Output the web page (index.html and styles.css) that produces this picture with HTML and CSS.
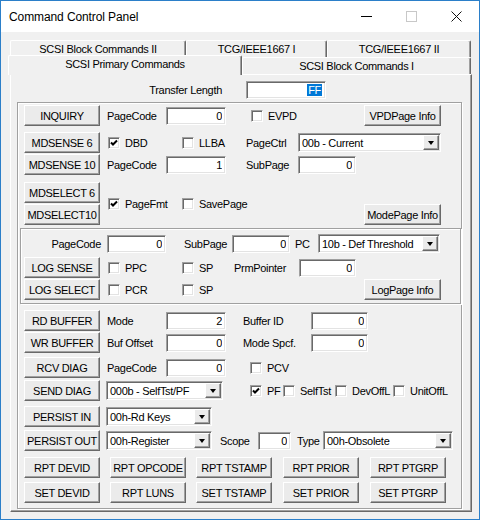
FILE: index.html
```html
<!DOCTYPE html>
<html lang="en">
<head>
  <meta charset="UTF-8">
  <title>Command Control Panel</title>
  <link rel="stylesheet" href="styles.css">
</head>
<body>
<div class="window">
  <div class="titlebar">
    <span class="title">Command Control Panel</span>
    <div class="caption-btns">
      <span class="cap"><svg width="11" height="11"><path d="M0 5.5H11" stroke="#000"/></svg></span>
      <span class="cap"><svg width="11" height="11"><rect x="0.5" y="0.5" width="10" height="10" fill="none" stroke="#c8c8c8"/></svg></span>
      <span class="cap"><svg width="11" height="11"><path d="M0.5 0.5L10.5 10.5M10.5 0.5L0.5 10.5" stroke="#111"/></svg></span>
    </div>
  </div>

  <div class="client">
    <div class="tabs">
      <div class="tabrow">
        <div class="tab w176">SCSI Block Commands II</div>
        <div class="tab w141">TCG/IEEE1667 I</div>
        <div class="tab w144">TCG/IEEE1667 II</div>
      </div>
      <div class="tabrow">
        <div class="tab selected w234">SCSI Primary Commands</div>
        <div class="tab w229">SCSI Block Commands I</div>
      </div>
    </div>

    <div class="panel">
      <div class="xfer">
        <span class="xfer-label">Transfer Length</span>
        <div class="field xfer-field"><span class="sel">FF</span></div>
      </div>

      <div class="group main">
        <div class="row mt2">
          <button class="btn">INQUIRY</button>
          <span class="lbl w59 ml7">PageCode</span>
          <input class="field w60" value="0">
          <span class="check ml25"><span class="box"></span>EVPD</span>
          <button class="btn info">VPDPage Info</button>
        </div>
        <div class="row mt6">
          <button class="btn">MDSENSE 6</button>
          <span class="check w74 ml8"><span class="box"><svg width="8" height="8"><polyline points="1,3.5 3,5.5 7,1.5" fill="none" stroke="#000" stroke-width="2"/></svg></span>DBD</span>
          <span class="check w64"><span class="box"></span>LLBA</span>
          <span class="lbl w52">PageCtrl</span>
          <div class="combo w143"><span>00b - Current</span><i class="drop"></i></div>
        </div>
        <div class="row mt1">
          <button class="btn">MDSENSE 10</button>
          <span class="lbl w59 ml7">PageCode</span>
          <input class="field w60" value="1">
          <span class="lbl w52 ml20">SubPage</span>
          <input class="field w58" value="0">
        </div>
        <div class="row tall mt7">
          <div class="btn-stack">
            <button class="btn">MDSELECT 6</button>
            <button class="btn">MDSELECT10</button>
          </div>
          <span class="check w74 ml8"><span class="box"><svg width="8" height="8"><polyline points="1,3.5 3,5.5 7,1.5" fill="none" stroke="#000" stroke-width="2"/></svg></span>PageFmt</span>
          <span class="check"><span class="box"></span>SavePage</span>
          <button class="btn info bottom">ModePage Info</button>
        </div>

        <div class="group log">
          <div class="row short mt5">
            <span class="lbl w80 right">PageCode</span>
            <input class="field w59 ml6" value="0">
            <span class="lbl w48 ml18">SubPage</span>
            <input class="field w58" value="0">
            <span class="lbl w23 ml5">PC</span>
            <div class="combo w122"><span>10b - Def Threshold</span><i class="drop"></i></div>
          </div>
          <div class="row mt4">
            <button class="btn ml3">LOG SENSE</button>
            <span class="check w74 ml8"><span class="box"></span>PPC</span>
            <span class="check w52"><span class="box"></span>SP</span>
            <span class="lbl w65">PrmPointer</span>
            <input class="field w57" value="0">
          </div>
          <div class="row mt1">
            <button class="btn ml3">LOG SELECT</button>
            <span class="check w74 ml8"><span class="box"></span>PCR</span>
            <span class="check"><span class="box"></span>SP</span>
            <button class="btn info">LogPage Info</button>
          </div>
        </div>

        <div class="row mt6">
          <button class="btn">RD BUFFER</button>
          <span class="lbl w59 ml7">Mode</span>
          <input class="field w60" value="2">
          <span class="lbl w68 ml17">Buffer ID</span>
          <input class="field w57" value="0">
        </div>
        <div class="row mt1">
          <button class="btn">WR BUFFER</button>
          <span class="lbl w59 ml7">Buf Offset</span>
          <input class="field w60" value="0">
          <span class="lbl w68 ml17">Mode Spcf.</span>
          <input class="field w57" value="0">
        </div>
        <div class="row mt4">
          <button class="btn">RCV DIAG</button>
          <span class="lbl w59 ml7">PageCode</span>
          <input class="field w60" value="0">
          <span class="check ml24"><span class="box"></span>PCV</span>
        </div>
        <div class="row mt2">
          <button class="btn">SEND DIAG</button>
          <div class="combo w117 ml6"><span>000b - SelfTst/PF</span><i class="drop"></i></div>
          <span class="check w33 ml27"><span class="box"><svg width="8" height="8"><polyline points="1,3.5 3,5.5 7,1.5" fill="none" stroke="#000" stroke-width="2"/></svg></span>PF</span>
          <span class="check w52"><span class="box"></span>SelfTst</span>
          <span class="check w58"><span class="box"></span>DevOffL</span>
          <span class="check"><span class="box"></span>UnitOffL</span>
        </div>
        <div class="row mt5">
          <button class="btn">PERSIST IN</button>
          <div class="combo w106 ml6"><span>00h-Rd Keys</span><i class="drop"></i></div>
        </div>
        <div class="row mt3">
          <button class="btn">PERSIST OUT</button>
          <div class="combo w106 ml6"><span>00h-Register</span><i class="drop"></i></div>
          <span class="lbl w38 ml8">Scope</span>
          <input class="field w33" value="0">
          <span class="lbl w26 ml6">Type</span>
          <div class="combo w130"><span>00h-Obsolete</span><i class="drop"></i></div>
        </div>
        <div class="row mt6">
          <button class="btn">RPT DEVID</button>
          <button class="btn ml10">RPT OPCODE</button>
          <button class="btn ml10">RPT TSTAMP</button>
          <button class="btn ml11">RPT PRIOR</button>
          <button class="btn ml11">RPT PTGRP</button>
        </div>
        <div class="row mt4">
          <button class="btn">SET DEVID</button>
          <button class="btn ml10">RPT LUNS</button>
          <button class="btn ml10">SET TSTAMP</button>
          <button class="btn ml11">SET PRIOR</button>
          <button class="btn ml11">SET PTGRP</button>
        </div>
      </div>
    </div>
  </div>
</div>
</body>
</html>
```

FILE: styles.css
```css
* {
  box-sizing: border-box;
}

body {
  margin: 0;
  font-family: "Liberation Sans", Arial, sans-serif;
  font-size: 11px;
  letter-spacing: -0.3px;
  color: #000;
}

.window {
  width: 480px;
  height: 520px;
  border: 1px solid #2b7fc9;
  background: #f0f0f0;
}

/* title bar */
.titlebar {
  height: 31px;
  background: #fff;
  display: flex;
  align-items: center;
}

.title {
  margin-left: 8px;
  font-size: 12px;
  letter-spacing: -0.1px;
}

.caption-btns {
  margin-left: auto;
  display: flex;
}

.cap {
  width: 45px;
  height: 31px;
  display: flex;
  align-items: center;
  justify-content: center;
}

.client {
  padding: 8px 0 0 9px;
}

/* tabs */
.tabrow {
  display: flex;
  height: 17px;
}

.tab {
  height: 17px;
  background: #f0f0f0;
  border-top: 1px solid #fff;
  border-left: 1px solid #fff;
  border-right: 1px solid #696969;
  box-shadow: inset -1px 0 #a0a0a0;
  border-radius: 2px 2px 0 0;
  text-align: center;
  line-height: 16px;
  white-space: nowrap;
}

.tab.selected {
  position: relative;
  z-index: 1;
  height: 20px;
  margin: -2px 0 -1px -2px;
}

.panel {
  width: 462px;
  height: 438px;
  border: 1px solid;
  border-color: #fff #696969 #696969 #fff;
  box-shadow: inset -1px -1px #a0a0a0;
  padding-top: 6px;
}

/* group boxes */
.group {
  border: 1px solid #a0a0a0;
  box-shadow: inset 1px 1px #fff, 1px 1px #fff;
}

.main {
  width: 445px;
  height: 407px;
  margin: 3px 0 0 6px;
}

.main > .row {
  padding: 0 20px 0 6px;
}

.log {
  width: 441px;
  height: 76px;
  margin: 3px 0 0 2px;
}

.log > .row {
  padding-right: 19px;
}

.row {
  display: flex;
  align-items: center;
  height: 21px;
}

.row > * {
  flex-shrink: 0;
}

.row.tall {
  height: 43px;
}

.row.short {
  height: 19px;
}

.btn-stack {
  display: flex;
  flex-direction: column;
  gap: 1px;
}

/* controls */
.btn {
  width: 76px;
  height: 21px;
  padding: 0;
  margin: 0;
  font: inherit;
  letter-spacing: inherit;
  color: #000;
  background: #ebebeb;
  border: 1px solid;
  border-color: #fff #696969 #696969 #fff;
  box-shadow: inset -1px -1px #a0a0a0;
  white-space: nowrap;
}

.btn.info {
  width: 77px;
  margin-left: auto;
}

.btn.bottom {
  align-self: flex-end;
}

.field,
.combo,
.box {
  background: #fff;
  border: 1px solid;
  border-color: #a0a0a0 #fff #fff #a0a0a0;
  box-shadow: inset 1px 1px #696969, inset -1px -1px #e3e3e3;
}

.field {
  height: 18px;
  margin: 0;
  padding: 0 3px;
  display: flex;
  align-items: center;
  font: inherit;
  letter-spacing: inherit;
  color: #000;
  text-align: right;
  outline: none;
}

.xfer {
  display: flex;
  align-items: center;
  height: 18px;
}

.xfer-label {
  width: 211px;
  text-align: right;
}

.xfer .xfer-field {
  margin-left: 24px;
  width: 80px;
  justify-content: flex-end;
}

.sel {
  background: #0078d7;
  color: #fff;
  padding: 0 1px;
  line-height: 12px;
}

.combo {
  height: 19px;
  display: flex;
  align-items: center;
  padding-left: 3px;
  white-space: nowrap;
}

.drop {
  margin: 0 1px 0 auto;
  width: 16px;
  height: 15px;
  background: #ebebeb;
  border: 1px solid;
  border-color: #fff #696969 #696969 #fff;
  box-shadow: inset -1px -1px #a0a0a0;
  display: flex;
  align-items: center;
  justify-content: center;
}

.drop::after {
  content: "";
  border-left: 3.5px solid transparent;
  border-right: 3.5px solid transparent;
  border-top: 4px solid #000;
}

.check {
  display: flex;
  align-items: center;
  white-space: nowrap;
}

.box {
  width: 12px;
  height: 12px;
  margin-right: 5px;
  display: flex;
  align-items: center;
  justify-content: center;
}

.lbl {
  white-space: nowrap;
}

.lbl.right {
  text-align: right;
}

/* sizes */
.w23 { width: 23px; }
.w26 { width: 26px; }
.w33 { width: 33px; }
.w38 { width: 38px; }
.w48 { width: 48px; }
.w52 { width: 52px; }
.w57 { width: 57px; }
.w58 { width: 58px; }
.w59 { width: 59px; }
.w60 { width: 60px; }
.w64 { width: 64px; }
.w65 { width: 65px; }
.w68 { width: 68px; }
.w74 { width: 74px; }
.w80 { width: 80px; }
.w106 { width: 106px; }
.w117 { width: 117px; }
.w122 { width: 122px; }
.w130 { width: 130px; }
.w141 { width: 141px; }
.w143 { width: 143px; }
.w144 { width: 144px; }
.w176 { width: 176px; }
.w229 { width: 229px; }
.w234 { width: 234px; }

.ml3 { margin-left: 3px; }
.ml5 { margin-left: 5px; }
.ml6 { margin-left: 6px; }
.ml7 { margin-left: 7px; }
.ml8 { margin-left: 8px; }
.ml10 { margin-left: 10px; }
.ml11 { margin-left: 11px; }
.ml17 { margin-left: 17px; }
.ml18 { margin-left: 18px; }
.ml20 { margin-left: 20px; }
.ml24 { margin-left: 24px; }
.ml25 { margin-left: 25px; }
.ml27 { margin-left: 27px; }

.mt1 { margin-top: 1px; }
.mt2 { margin-top: 2px; }
.mt3 { margin-top: 3px; }
.mt4 { margin-top: 4px; }
.mt5 { margin-top: 5px; }
.mt6 { margin-top: 6px; }
.mt7 { margin-top: 7px; }
```
